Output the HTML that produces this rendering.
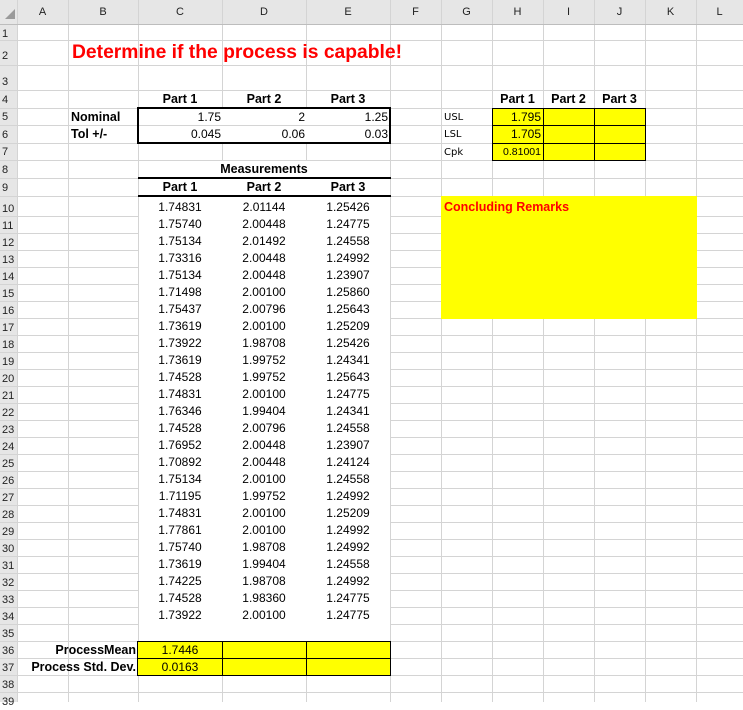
<!DOCTYPE html>
<html><head><meta charset="utf-8"><style>
*{margin:0;padding:0;box-sizing:border-box}
body{width:743px;height:702px;overflow:hidden;background:#fff;position:relative;font-family:"Liberation Sans",Arial,sans-serif;font-size:12px;color:#000}
.v{position:absolute;top:0;height:702px;width:1px;background:#d4d4d4}
.h{position:absolute;left:0;width:743px;height:1px;background:#d4d4d4}
.hdr{position:absolute;background:#e6e6e6}
.t{position:absolute;height:16px;line-height:16px;white-space:nowrap}
.c{text-align:center}.r{text-align:right}
.b{font-weight:bold}
.rn{position:absolute;left:2px;width:14px;font-size:11px;color:#222;height:16px;line-height:16px}
.cl{position:absolute;top:6px;font-size:11px;color:#222;text-align:center}
.y{position:absolute;background:#ffff00}
.k{position:absolute;background:#000}
</style></head><body>
<div class="hdr" style="left:0;top:0;width:743px;height:24px"></div>
<div class="hdr" style="left:0;top:0;width:17px;height:702px"></div>
<div class="v" style="left:17px"></div><div class="v" style="left:68px"></div><div class="v" style="left:138px"></div><div class="v" style="left:222px"></div><div class="v" style="left:306px"></div><div class="v" style="left:390px"></div><div class="v" style="left:441px"></div><div class="v" style="left:492px"></div><div class="v" style="left:543px"></div><div class="v" style="left:594px"></div><div class="v" style="left:645px"></div><div class="v" style="left:696px"></div>
<div class="h" style="top:24px;background:#bdbdbd"></div>
<div class="h" style="top:40px"></div><div class="h" style="top:65px"></div><div class="h" style="top:90px"></div><div class="h" style="top:108px"></div><div class="h" style="top:125px"></div><div class="h" style="top:143px"></div><div class="h" style="top:160px"></div><div class="h" style="top:178px"></div><div class="h" style="top:196px"></div><div class="h" style="top:216px"></div>
<div class="h" style="top:233px"></div><div class="h" style="top:250px"></div><div class="h" style="top:267px"></div><div class="h" style="top:284px"></div><div class="h" style="top:301px"></div><div class="h" style="top:318px"></div><div class="h" style="top:335px"></div><div class="h" style="top:352px"></div><div class="h" style="top:369px"></div><div class="h" style="top:386px"></div><div class="h" style="top:403px"></div><div class="h" style="top:420px"></div><div class="h" style="top:437px"></div><div class="h" style="top:454px"></div><div class="h" style="top:471px"></div><div class="h" style="top:488px"></div><div class="h" style="top:505px"></div><div class="h" style="top:522px"></div><div class="h" style="top:539px"></div><div class="h" style="top:556px"></div><div class="h" style="top:573px"></div><div class="h" style="top:590px"></div><div class="h" style="top:607px"></div><div class="h" style="top:624px"></div><div class="h" style="top:641px"></div><div class="h" style="top:658px"></div><div class="h" style="top:675px"></div><div class="h" style="top:692px"></div>
<div style="position:absolute;left:139px;top:161px;width:251px;height:480px;background:#fff"></div>
<div style="position:absolute;left:139px;top:109px;width:251px;height:16px;background:#fff"></div>
<div style="position:absolute;left:139px;top:126px;width:251px;height:17px;background:#fff"></div>
<div style="position:absolute;left:5px;top:9px;width:0;height:0;border-left:10px solid transparent;border-bottom:10px solid #9a9a9a"></div>
<div class="cl" style="left:17px;width:51px">A</div><div class="cl" style="left:68px;width:70px">B</div><div class="cl" style="left:138px;width:84px">C</div><div class="cl" style="left:222px;width:84px">D</div><div class="cl" style="left:306px;width:84px">E</div><div class="cl" style="left:390px;width:51px">F</div><div class="cl" style="left:441px;width:51px">G</div><div class="cl" style="left:492px;width:51px">H</div><div class="cl" style="left:543px;width:51px">I</div><div class="cl" style="left:594px;width:51px">J</div><div class="cl" style="left:645px;width:51px">K</div><div class="cl" style="left:696px;width:47px">L</div>
<div class="rn" style="top:26px">1</div><div class="rn" style="top:48px">2</div><div class="rn" style="top:74px">3</div><div class="rn" style="top:92px">4</div><div class="rn" style="top:109px">5</div><div class="rn" style="top:127px">6</div><div class="rn" style="top:144px">7</div><div class="rn" style="top:162px">8</div><div class="rn" style="top:180px">9</div><div class="rn" style="top:201px">10</div><div class="rn" style="top:218px">11</div><div class="rn" style="top:235px">12</div><div class="rn" style="top:252px">13</div><div class="rn" style="top:269px">14</div><div class="rn" style="top:286px">15</div><div class="rn" style="top:303px">16</div><div class="rn" style="top:320px">17</div><div class="rn" style="top:337px">18</div><div class="rn" style="top:354px">19</div><div class="rn" style="top:371px">20</div><div class="rn" style="top:388px">21</div><div class="rn" style="top:405px">22</div><div class="rn" style="top:422px">23</div><div class="rn" style="top:439px">24</div><div class="rn" style="top:456px">25</div><div class="rn" style="top:473px">26</div><div class="rn" style="top:490px">27</div><div class="rn" style="top:507px">28</div><div class="rn" style="top:524px">29</div><div class="rn" style="top:541px">30</div><div class="rn" style="top:558px">31</div><div class="rn" style="top:575px">32</div><div class="rn" style="top:592px">33</div><div class="rn" style="top:609px">34</div><div class="rn" style="top:626px">35</div><div class="rn" style="top:643px">36</div><div class="rn" style="top:660px">37</div><div class="rn" style="top:677px">38</div><div class="rn" style="top:694px">39</div>
<div class="t b" style="left:72px;top:42px;height:22px;line-height:22px;font-size:19.3px;color:#ff0000">Determine if the process is capable!</div>
<div class="t b c" style="left:138px;width:84px;top:91px;font-size:12.5px">Part 1</div>
<div class="t b c" style="left:222px;width:84px;top:91px;font-size:12.5px">Part 2</div>
<div class="t b c" style="left:306px;width:84px;top:91px;font-size:12.5px">Part 3</div>
<div class="t b" style="left:71px;top:109px;font-size:12.5px">Nominal</div>
<div class="t b" style="left:71px;top:126px;font-size:12.5px">Tol +/-</div>
<div class="t r" style="left:138px;width:83px;top:109px">1.75</div>
<div class="t r" style="left:222px;width:83px;top:109px">2</div>
<div class="t r" style="left:306px;width:82px;top:109px">1.25</div>
<div class="t r" style="left:138px;width:83px;top:126px">0.045</div>
<div class="t r" style="left:222px;width:83px;top:126px">0.06</div>
<div class="t r" style="left:306px;width:82px;top:126px">0.03</div>
<div style="position:absolute;left:137px;top:107px;width:254px;height:37px;border:2px solid #000"></div>
<div class="t b c" style="left:138px;width:252px;top:161px;font-size:12.5px">Measurements</div>
<div class="k" style="left:138px;top:177px;width:253px;height:2px"></div>
<div class="t b c" style="left:138px;width:84px;top:179px;font-size:12.5px">Part 1</div>
<div class="t b c" style="left:222px;width:84px;top:179px;font-size:12.5px">Part 2</div>
<div class="t b c" style="left:306px;width:84px;top:179px;font-size:12.5px">Part 3</div>
<div class="k" style="left:138px;top:195px;width:253px;height:2px"></div>
<div style="position:absolute;left:138px;top:199px;width:252px;line-height:17px;font-size:12px">
<table style="border-collapse:collapse;width:252px;text-align:center">
<tr><td style="width:84px;height:17px;padding:0">1.74831</td><td style="width:84px;padding:0">2.01144</td><td style="width:84px;padding:0">1.25426</td></tr>
<tr style="height:17px"><td>1.75740</td><td>2.00448</td><td>1.24775</td></tr>
<tr style="height:17px"><td>1.75134</td><td>2.01492</td><td>1.24558</td></tr>
<tr style="height:17px"><td>1.73316</td><td>2.00448</td><td>1.24992</td></tr>
<tr style="height:17px"><td>1.75134</td><td>2.00448</td><td>1.23907</td></tr>
<tr style="height:17px"><td>1.71498</td><td>2.00100</td><td>1.25860</td></tr>
<tr style="height:17px"><td>1.75437</td><td>2.00796</td><td>1.25643</td></tr>
<tr style="height:17px"><td>1.73619</td><td>2.00100</td><td>1.25209</td></tr>
<tr style="height:17px"><td>1.73922</td><td>1.98708</td><td>1.25426</td></tr>
<tr style="height:17px"><td>1.73619</td><td>1.99752</td><td>1.24341</td></tr>
<tr style="height:17px"><td>1.74528</td><td>1.99752</td><td>1.25643</td></tr>
<tr style="height:17px"><td>1.74831</td><td>2.00100</td><td>1.24775</td></tr>
<tr style="height:17px"><td>1.76346</td><td>1.99404</td><td>1.24341</td></tr>
<tr style="height:17px"><td>1.74528</td><td>2.00796</td><td>1.24558</td></tr>
<tr style="height:17px"><td>1.76952</td><td>2.00448</td><td>1.23907</td></tr>
<tr style="height:17px"><td>1.70892</td><td>2.00448</td><td>1.24124</td></tr>
<tr style="height:17px"><td>1.75134</td><td>2.00100</td><td>1.24558</td></tr>
<tr style="height:17px"><td>1.71195</td><td>1.99752</td><td>1.24992</td></tr>
<tr style="height:17px"><td>1.74831</td><td>2.00100</td><td>1.25209</td></tr>
<tr style="height:17px"><td>1.77861</td><td>2.00100</td><td>1.24992</td></tr>
<tr style="height:17px"><td>1.75740</td><td>1.98708</td><td>1.24992</td></tr>
<tr style="height:17px"><td>1.73619</td><td>1.99404</td><td>1.24558</td></tr>
<tr style="height:17px"><td>1.74225</td><td>1.98708</td><td>1.24992</td></tr>
<tr style="height:17px"><td>1.74528</td><td>1.98360</td><td>1.24775</td></tr>
<tr style="height:17px"><td>1.73922</td><td>2.00100</td><td>1.24775</td></tr>
</table></div>
<div class="y" style="left:138px;top:641px;width:252px;height:34px"></div>
<div style="position:absolute;left:137px;top:641px;width:254px;height:35px;border:1px solid #000"></div>
<div class="k" style="left:137px;top:658px;width:254px;height:1px"></div>
<div class="k" style="left:222px;top:641px;width:1px;height:35px"></div>
<div class="k" style="left:306px;top:641px;width:1px;height:35px"></div>
<div class="t b r" style="left:0;width:136px;top:642px;font-size:12.5px">ProcessMean</div>
<div class="t b r" style="left:0;width:136px;top:659px;font-size:12.5px">Process Std. Dev.</div>
<div class="t c" style="left:138px;width:84px;top:642px">1.7446</div>
<div class="t c" style="left:138px;width:84px;top:659px">0.0163</div>
<div class="t b c" style="left:492px;width:51px;top:91px;font-size:12.5px">Part 1</div>
<div class="t b c" style="left:543px;width:51px;top:91px;font-size:12.5px">Part 2</div>
<div class="t b c" style="left:594px;width:51px;top:91px;font-size:12.5px">Part 3</div>
<div class="y" style="left:492px;top:108px;width:153px;height:52px"></div>
<div style="position:absolute;left:492px;top:108px;width:154px;height:53px;border:1px solid #000"></div>
<div class="k" style="left:492px;top:125px;width:154px;height:1px"></div>
<div class="k" style="left:492px;top:143px;width:154px;height:1px"></div>
<div class="k" style="left:543px;top:108px;width:1px;height:53px"></div>
<div class="k" style="left:594px;top:108px;width:1px;height:53px"></div>
<div class="t" style="left:444px;top:110px;font-family:'DejaVu Sans',sans-serif;font-size:10px">USL</div>
<div class="t" style="left:444px;top:127px;font-family:'DejaVu Sans',sans-serif;font-size:10px">LSL</div>
<div class="t" style="left:444px;top:145px;font-family:'DejaVu Sans',sans-serif;font-size:10px">Cpk</div>
<div class="t r" style="left:492px;width:49px;top:109px">1.795</div>
<div class="t r" style="left:492px;width:49px;top:126px">1.705</div>
<div class="t r" style="left:492px;width:49px;top:144px;font-size:10.5px">0.81001</div>
<div class="y" style="left:441px;top:196px;width:256px;height:123px"></div>
<div class="t b" style="left:444px;top:199px;color:#ff0000;font-size:12.5px">Concluding Remarks</div>
</body></html>
